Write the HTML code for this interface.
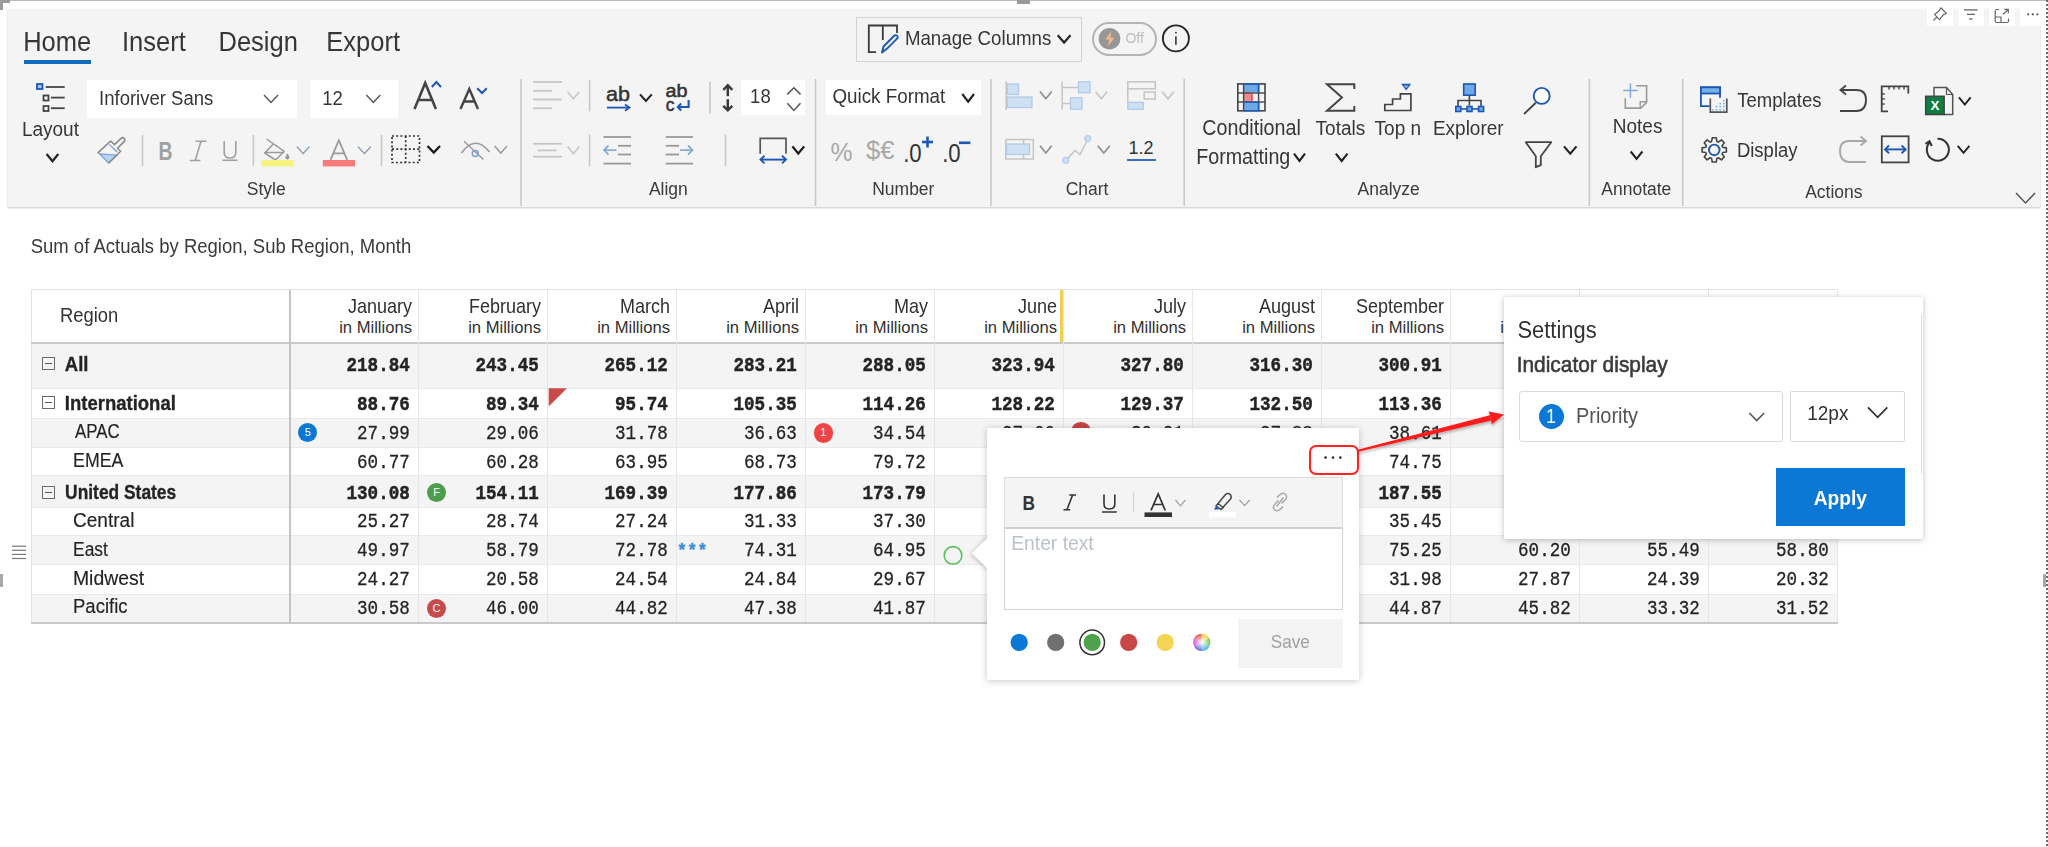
<!DOCTYPE html><html><head><meta charset="utf-8"><style>
html,body{margin:0;padding:0}
body{width:2048px;height:847px;position:relative;overflow:hidden;background:#fff;font-family:'Liberation Sans',sans-serif;}
.t{position:absolute;white-space:nowrap;line-height:1;}
.r{position:absolute;}
svg{position:absolute;left:0;top:0;overflow:visible}
</style></head><body>

<div class="r" style="left:0px;top:0px;width:2048px;height:1px;background:#b9b9b9;"></div>
<div class="r" style="left:0px;top:0px;width:10px;height:3px;background:#9a9a9a;"></div>
<div class="r" style="left:0px;top:0px;width:3px;height:10px;background:#9a9a9a;"></div>
<div class="r" style="left:1017px;top:0px;width:13px;height:4px;background:#999;"></div>
<div class="r" style="left:2046px;top:0;width:2px;height:847px;background:repeating-linear-gradient(#6a6a6a 0 2px,#fff 2px 4px)"></div>
<div class="r" style="left:0px;top:574px;width:3px;height:13px;background:#a8a8a8;"></div>
<div class="r" style="left:2043px;top:574px;width:3px;height:13px;background:#a8a8a8;"></div>
<div class="r" style="left:8px;top:9px;width:2032px;height:198px;background:#f4f4f4;box-shadow:0 1px 2px rgba(0,0,0,0.22);"></div>
<div class="r" style="left:1927px;top:8px;width:26px;height:18px;background:#fff;"></div>
<div class="r" style="left:1958px;top:8px;width:26px;height:18px;background:#fff;"></div>
<div class="r" style="left:1989px;top:8px;width:26px;height:18px;background:#fff;"></div>
<div class="r" style="left:2020px;top:8px;width:21px;height:18px;background:#fff;"></div>
<div class="t" style="left:23.2px;top:29.7px;font-size:25.5px;color:#363636;font-family:'Liberation Sans',sans-serif;transform:scale(1,1.08);transform-origin:2.04px 21.59px;">Home</div>
<div class="t" style="left:122.0px;top:29.7px;font-size:25.5px;color:#363636;font-family:'Liberation Sans',sans-serif;transform:scale(1,1.08);transform-origin:2.04px 21.59px;">Insert</div>
<div class="t" style="left:218.5px;top:29.7px;font-size:25.5px;color:#363636;font-family:'Liberation Sans',sans-serif;transform:scale(1,1.08);transform-origin:2.04px 21.59px;">Design</div>
<div class="t" style="left:326.3px;top:29.7px;font-size:25.5px;color:#363636;font-family:'Liberation Sans',sans-serif;transform:scale(1,1.08);transform-origin:2.04px 21.59px;">Export</div>
<div class="r" style="left:24px;top:60px;width:67px;height:4px;background:#0f6cbd;"></div>
<div class="r" style="left:856px;top:17px;width:224px;height:43px;border:1px solid #d2d2d2;box-sizing:content-box"></div>
<div class="t" style="left:904.9px;top:30.1px;font-size:18.7px;color:#363636;font-family:'Liberation Sans',sans-serif;transform:scale(1,1.08);transform-origin:1.50px 15.83px;">Manage Columns</div>
<div class="r" style="left:1091.8px;top:21.6px;width:65px;height:34.4px;border:2px solid #b4b4b4;border-radius:17.2px;box-sizing:border-box"></div>
<div class="t" style="left:1125.4px;top:31.1px;font-size:14px;color:#bdbdbd;font-family:'Liberation Sans',sans-serif;transform:scale(1,1.08);transform-origin:0.70px 11.85px;">Off</div>
<div class="r" style="left:87px;top:80px;width:210px;height:38px;background:#fff;"></div>
<div class="r" style="left:310px;top:80px;width:88px;height:38px;background:#fff;"></div>
<div class="r" style="left:741px;top:80px;width:64px;height:35px;background:#fff;"></div>
<div class="r" style="left:826px;top:80px;width:155px;height:35px;background:#fff;"></div>
<div class="t" style="left:99.1px;top:90.1px;font-size:18.5px;color:#363636;font-family:'Liberation Sans',sans-serif;transform:scale(1,1.08);transform-origin:1.67px 15.66px;">Inforiver Sans</div>
<div class="t" style="left:322.3px;top:90.1px;font-size:18.5px;color:#363636;font-family:'Liberation Sans',sans-serif;transform:scale(1,1.08);transform-origin:1.30px 15.66px;">12</div>
<div class="t" style="left:750.1px;top:88.3px;font-size:18.5px;color:#363636;font-family:'Liberation Sans',sans-serif;transform:scale(1,1.08);transform-origin:1.30px 15.66px;">18</div>
<div class="t" style="left:832.5px;top:88.1px;font-size:18.8px;color:#363636;font-family:'Liberation Sans',sans-serif;transform:scale(1,1.08);transform-origin:0.94px 15.92px;">Quick Format</div>
<div class="t" style="left:21.9px;top:119.9px;font-size:19px;color:#363636;font-family:'Liberation Sans',sans-serif;transform:scale(1,1.08);transform-origin:1.52px 16.09px;">Layout</div>
<div class="t" style="left:1202.3px;top:118.7px;font-size:19.7px;color:#363636;font-family:'Liberation Sans',sans-serif;transform:scale(1,1.08);transform-origin:0.98px 16.68px;">Conditional</div>
<div class="t" style="left:1196.2px;top:148.3px;font-size:19.7px;color:#363636;font-family:'Liberation Sans',sans-serif;transform:scale(1,1.08);transform-origin:1.58px 16.68px;">Formatting</div>
<div class="t" style="left:1315.6px;top:119.3px;font-size:19px;color:#363636;font-family:'Liberation Sans',sans-serif;transform:scale(1,1.08);transform-origin:0.38px 16.09px;">Totals</div>
<div class="t" style="left:1374.6px;top:119.3px;font-size:19px;color:#363636;font-family:'Liberation Sans',sans-serif;transform:scale(1,1.08);transform-origin:0.38px 16.09px;">Top n</div>
<div class="t" style="left:1432.9px;top:119.3px;font-size:19px;color:#363636;font-family:'Liberation Sans',sans-serif;transform:scale(1,1.08);transform-origin:1.52px 16.09px;">Explorer</div>
<div class="t" style="left:1612.8px;top:117.1px;font-size:19px;color:#363636;font-family:'Liberation Sans',sans-serif;transform:scale(1,1.08);transform-origin:1.52px 16.09px;">Notes</div>
<div class="t" style="left:1737.2px;top:91.5px;font-size:18.5px;color:#363636;font-family:'Liberation Sans',sans-serif;transform:scale(1,1.08);transform-origin:0.37px 15.66px;">Templates</div>
<div class="t" style="left:1736.9px;top:142.3px;font-size:18.5px;color:#363636;font-family:'Liberation Sans',sans-serif;transform:scale(1,1.08);transform-origin:1.48px 15.66px;">Display</div>
<div class="t" style="left:246.8px;top:180.5px;font-size:17.5px;color:#3b3a39;font-family:'Liberation Sans',sans-serif;transform:scale(1,1.08);transform-origin:0.53px 14.82px;">Style</div>
<div class="t" style="left:648.9px;top:180.7px;font-size:17.5px;color:#3b3a39;font-family:'Liberation Sans',sans-serif;transform:scale(1,1.08);transform-origin:0.53px 14.82px;">Align</div>
<div class="t" style="left:872.2px;top:180.7px;font-size:17.5px;color:#3b3a39;font-family:'Liberation Sans',sans-serif;transform:scale(1,1.08);transform-origin:0.53px 14.82px;">Number</div>
<div class="t" style="left:1065.7px;top:180.7px;font-size:17.5px;color:#3b3a39;font-family:'Liberation Sans',sans-serif;transform:scale(1,1.08);transform-origin:0.53px 14.82px;">Chart</div>
<div class="t" style="left:1357.5px;top:180.7px;font-size:17.5px;color:#3b3a39;font-family:'Liberation Sans',sans-serif;transform:scale(1,1.08);transform-origin:0.53px 14.82px;">Analyze</div>
<div class="t" style="left:1601.3px;top:181.0px;font-size:17.5px;color:#3b3a39;font-family:'Liberation Sans',sans-serif;transform:scale(1,1.08);transform-origin:0.53px 14.82px;">Annotate</div>
<div class="t" style="left:1805.2px;top:183.7px;font-size:17.5px;color:#3b3a39;font-family:'Liberation Sans',sans-serif;transform:scale(1,1.08);transform-origin:0.53px 14.82px;">Actions</div>
<svg width="2048" height="847" viewBox="0 0 2048 847">
<line x1="521" y1="79" x2="521" y2="206" stroke="#c8c8c8" stroke-width="1.6" />
<line x1="815.5" y1="79" x2="815.5" y2="206" stroke="#c8c8c8" stroke-width="1.6" />
<line x1="991" y1="79" x2="991" y2="206" stroke="#c8c8c8" stroke-width="1.6" />
<line x1="1184.2" y1="79" x2="1184.2" y2="206" stroke="#c8c8c8" stroke-width="1.6" />
<line x1="1589.4" y1="79" x2="1589.4" y2="206" stroke="#c8c8c8" stroke-width="1.6" />
<line x1="1682.7" y1="79" x2="1682.7" y2="206" stroke="#c8c8c8" stroke-width="1.6" />
<line x1="142.5" y1="135" x2="142.5" y2="166" stroke="#c8c8c8" stroke-width="1.6" />
<line x1="253.4" y1="135" x2="253.4" y2="166" stroke="#c8c8c8" stroke-width="1.6" />
<line x1="381.5" y1="135" x2="381.5" y2="166" stroke="#c8c8c8" stroke-width="1.6" />
<line x1="589.6" y1="80" x2="589.6" y2="111.3" stroke="#c8c8c8" stroke-width="1.6" />
<line x1="589.6" y1="134.7" x2="589.6" y2="166.2" stroke="#c8c8c8" stroke-width="1.6" />
<line x1="710" y1="82" x2="710" y2="113.5" stroke="#c8c8c8" stroke-width="1.6" />
<line x1="725.5" y1="134.7" x2="725.5" y2="166.2" stroke="#c8c8c8" stroke-width="1.6" />
<path d="M876,25.5 H868.8 V52.2 H876" fill="none" stroke="#3a3a3a" stroke-width="1.8"/>
<path d="M876,25.5 H897 V33 M882.8,25.5 V40" fill="none" stroke="#3a3a3a" stroke-width="1.8"/>
<path d="M882,52.5 L883.5,46.5 L894.5,35.5 Q897.5,34.5 897.8,37.8 L886.8,48.8 Z" fill="none" stroke="#1c57b3" stroke-width="1.9" stroke-linejoin="round"/>
<polyline points="1057.7,35.3 1064.1,42.5 1070.5,35.3" fill="none" stroke="#252525" stroke-width="2.2"/>
<circle cx="1109.5" cy="38.7" r="10.8" fill="#979797"/>
<path d="M1111.6,30.9 L1105.2,39.6 L1109.3,39.6 L1108.1,46.3 L1114.4,37.8 L1110.3,37.8 Z" fill="#f8b88a"/>
<circle cx="1175.9" cy="38.4" r="13" fill="none" stroke="#262626" stroke-width="1.9"/>
<circle cx="1175.9" cy="32.6" r="0.95" fill="#333"/>
<line x1="1175.9" y1="36.2" x2="1175.9" y2="44.8" stroke="#333" stroke-width="1.6" />
<path d="M1940.8,7.8 L1946.5,13.4 L1943.4,14.6 L1939.6,19.6 L1934.4,14.4 L1939.3,10.7 Z M1936.9,17 L1933.4,20.6" fill="none" stroke="#666" stroke-width="1.2" stroke-linejoin="round"/>
<line x1="1964" y1="9.9" x2="1977.6" y2="9.9" stroke="#666" stroke-width="1.3" /><line x1="1966.8" y1="14.4" x2="1975" y2="14.4" stroke="#666" stroke-width="1.3" /><line x1="1969" y1="19" x2="1972.5" y2="19" stroke="#666" stroke-width="1.3" />
<path d="M1999,9.5 H1997 Q1995.2,9.5 1995.2,11.3 V20.7 Q1995.2,22.5 1997,22.5 H2006.7 Q2008.5,22.5 2008.5,20.7 V18.5 M1995.2,17 H2001 V22.5 M2003,14.5 L2008.3,9.3 M2004.3,9.3 H2008.3 V13.3" fill="none" stroke="#666" stroke-width="1.2"/>
<circle cx="2028.2" cy="14.3" r="1.1" fill="#555"/>
<circle cx="2032.8" cy="14.3" r="1.1" fill="#555"/>
<circle cx="2037.4" cy="14.3" r="1.1" fill="#555"/>
<rect x="37" y="84" width="5.5" height="5" fill="#a9c7ec" stroke="#1c57b3" stroke-width="1.8"/>
<line x1="45.7" y1="87" x2="64.7" y2="87" stroke="#444" stroke-width="1.8" /><line x1="51" y1="97.6" x2="64.7" y2="97.6" stroke="#444" stroke-width="1.8" /><line x1="51" y1="108.2" x2="64.7" y2="108.2" stroke="#444" stroke-width="1.8" />
<rect x="43.5" y="95.5" width="5" height="5" fill="none" stroke="#444" stroke-width="1.8"/>
<rect x="43.5" y="106" width="5" height="5" fill="none" stroke="#444" stroke-width="1.8"/>
<polyline points="46.6,154 52.45,161.3 58.3,154" fill="none" stroke="#222" stroke-width="2.2"/>
<polyline points="264,95 271.0,102.5 278,95" fill="none" stroke="#555" stroke-width="1.4"/><polyline points="366.4,95 373.35,102.5 380.3,95" fill="none" stroke="#555" stroke-width="1.4"/>
<path d="M414.5,109 L425.2,83 L435.9,109 M418.6,100 H431.8" fill="none" stroke="#444" stroke-width="2.6"/>
<polyline points="431.8,87 436.4,82 441,87" fill="none" stroke="#1c57b3" stroke-width="2"/>
<path d="M460.5,109 L469.3,89 L478,109 M463.8,101.5 H474.8" fill="none" stroke="#444" stroke-width="2.4"/>
<polyline points="477.2,88.3 482,93 486.8,88.3" fill="none" stroke="#1c57b3" stroke-width="2"/>
<line x1="533" y1="82" x2="562" y2="82" stroke="#c6c6c6" stroke-width="1.8" /><line x1="533" y1="90.8" x2="552" y2="90.8" stroke="#c6c6c6" stroke-width="1.8" /><line x1="533" y1="99.5" x2="562" y2="99.5" stroke="#c6c6c6" stroke-width="1.8" /><line x1="533" y1="108.3" x2="552" y2="108.3" stroke="#c6c6c6" stroke-width="1.8" />
<polyline points="567.6,92 573.45,98.8 579.3,92" fill="none" stroke="#c6c6c6" stroke-width="1.6"/>
<text x="606" y="101" font-family="Liberation Sans" font-size="21" fill="#333" stroke="#333" stroke-width="0.5" textLength="24" lengthAdjust="spacingAndGlyphs">ab</text>
<line x1="607" y1="107.6" x2="628" y2="107.6" stroke="#1c57b3" stroke-width="1.8" /><polyline points="625,104.5 629.5,107.6 625,110.7" fill="none" stroke="#1c57b3" stroke-width="1.8"/>
<polyline points="640,94.4 645.9,101 651.8,94.4" fill="none" stroke="#222" stroke-width="2"/>
<text x="665.5" y="97.4" font-family="Liberation Sans" font-size="17.5" fill="#333" stroke="#333" stroke-width="0.5" textLength="22" lengthAdjust="spacingAndGlyphs">ab</text>
<text x="665.8" y="110.8" font-family="Liberation Sans" font-size="17.5" fill="#333" stroke="#333" stroke-width="0.5">c</text>
<path d="M688.6,100 V107 H678 M681.2,103.6 L677.8,107 L681.2,110.4" fill="none" stroke="#1c57b3" stroke-width="2.1"/>
<line x1="727.8" y1="85.5" x2="727.8" y2="96.2" stroke="#3a3a3a" stroke-width="2.5" /><line x1="727.8" y1="99.2" x2="727.8" y2="110" stroke="#3a3a3a" stroke-width="2.5" /><polyline points="723.3,89.8 727.8,85.2 732.3,89.8" fill="none" stroke="#3a3a3a" stroke-width="2.4"/><polyline points="723.3,105.8 727.8,110.4 732.3,105.8" fill="none" stroke="#3a3a3a" stroke-width="2.4"/>
<polyline points="787.3,94.4 793.9,87.8 800.5,94.4" fill="none" stroke="#555" stroke-width="1.5"/><polyline points="787.3,103.2 793.9,110.5 800.5,103.2" fill="none" stroke="#555" stroke-width="1.5"/>
<polyline points="962.3,94 968.15,101.7 974,94" fill="none" stroke="#222" stroke-width="2.1"/>
<path d="M99.5,153.8 L108.5,163 L117,155.2 Z" fill="#b9d5f2" stroke="#7aa6d8" stroke-width="1.3" stroke-linejoin="round"/>
<path d="M99.5,153.5 L98.2,152.6 L110.6,141 L114.5,144.6 L120.8,138.6 Q123,136.6 124.5,138.8 Q125.5,140.5 123.3,142.4 L117.5,148.2 L120.6,151.2 L108.5,163.2" fill="none" stroke="#8a8a8a" stroke-width="1.6" stroke-linejoin="round"/>
<line x1="109.2" y1="144.4" x2="117.2" y2="152" stroke="#7aa0d0" stroke-width="1.3" />
<text x="158.5" y="159.6" font-family="Liberation Sans" font-weight="bold" font-size="26" fill="#a0a0a0" textLength="14" lengthAdjust="spacingAndGlyphs">B</text>
<path d="M195.5,141.3 H206.5 M189.7,160.5 H200.5 M201,141.3 L195.2,160.5" fill="none" stroke="#a0a0a0" stroke-width="1.6"/>
<path d="M224.2,141 V152.5 Q224.2,158 230,158 Q235.8,158 235.8,152.5 V141 M222.4,160.2 H237.6" fill="none" stroke="#a0a0a0" stroke-width="1.6"/>
<path d="M266.5,139 L284.3,151.3 M273.6,143.8 L264.6,153 L275.6,160 L284.3,151.3 M264.6,152.6 H284.3" fill="none" stroke="#9a9a9a" stroke-width="1.5" stroke-linejoin="round"/>
<path d="M287.4,153.2 Q284.8,157 285.6,158.6 Q287.4,160.6 289.2,158.6 Q290,157 287.4,153.2Z" fill="#999"/>
<rect x="261.4" y="160" width="32.2" height="6.4" fill="#f6f37e"/>
<polyline points="296.9,146.6 303.1,153.6 309.3,146.6" fill="none" stroke="#7f93ac" stroke-width="1.3"/>
<path d="M330.5,159.8 L338.8,140.2 L347.2,159.8 M333.3,153.3 H344.3" fill="none" stroke="#9a9a9a" stroke-width="1.8"/>
<rect x="322.8" y="160" width="32.2" height="6.4" fill="#f77b7b"/>
<polyline points="358,146.6 364.4,153.6 370.8,146.6" fill="none" stroke="#7f93ac" stroke-width="1.3"/>
<rect x="392" y="136" width="27.5" height="26.5" fill="none" stroke="#333" stroke-width="1.7" stroke-dasharray="2 2.2"/>
<line x1="405.7" y1="136" x2="405.7" y2="162.5" stroke="#333" stroke-width="1.7" stroke-dasharray="2 2.2"/><line x1="392" y1="149.2" x2="419.5" y2="149.2" stroke="#333" stroke-width="1.7" stroke-dasharray="2 2.2"/>
<polyline points="427.5,146 433.75,152.5 440,146" fill="none" stroke="#1a1a1a" stroke-width="2.3"/>
<path d="M461.5,153 Q475,134 489.5,152" fill="none" stroke="#9a9a9a" stroke-width="1.5"/>
<line x1="464" y1="141.3" x2="483.5" y2="159.5" stroke="#9a9a9a" stroke-width="1.5" />
<circle cx="475.3" cy="153.6" r="3" fill="none" stroke="#7aa0d0" stroke-width="1.5"/>
<polyline points="494.6,146 500.8,153 507,146" fill="none" stroke="#9a9a9a" stroke-width="1.5"/>
<line x1="533" y1="143.8" x2="562" y2="143.8" stroke="#c6c6c6" stroke-width="1.8" /><line x1="537.6" y1="150.4" x2="556.6" y2="150.4" stroke="#c6c6c6" stroke-width="1.8" /><line x1="533" y1="156.7" x2="562" y2="156.7" stroke="#c6c6c6" stroke-width="1.8" />
<polyline points="567.6,146.4 573.45,153.7 579.3,146.4" fill="none" stroke="#c6c6c6" stroke-width="1.6"/>
<line x1="603.5" y1="137" x2="631" y2="137" stroke="#999" stroke-width="1.8" /><line x1="603.5" y1="163.6" x2="631" y2="163.6" stroke="#999" stroke-width="1.8" /><line x1="618" y1="145.8" x2="631" y2="145.8" stroke="#999" stroke-width="1.8" /><line x1="618" y1="154.5" x2="631" y2="154.5" stroke="#999" stroke-width="1.8" />
<line x1="604" y1="150.1" x2="616.5" y2="150.1" stroke="#7fa6d6" stroke-width="1.6" /><polyline points="608.5,145.6 604,150.1 608.5,154.6" fill="none" stroke="#7fa6d6" stroke-width="1.6"/>
<line x1="665.7" y1="137" x2="693.1" y2="137" stroke="#999" stroke-width="1.8" /><line x1="665.7" y1="163.6" x2="693.1" y2="163.6" stroke="#999" stroke-width="1.8" /><line x1="665.7" y1="145.8" x2="679" y2="145.8" stroke="#999" stroke-width="1.8" /><line x1="665.7" y1="154.5" x2="679" y2="154.5" stroke="#999" stroke-width="1.8" />
<line x1="680" y1="150.1" x2="692.5" y2="150.1" stroke="#7fa6d6" stroke-width="1.6" /><polyline points="688,145.6 692.5,150.1 688,154.6" fill="none" stroke="#7fa6d6" stroke-width="1.6"/>
<path d="M760.2,153.7 V138.4 H786 V153.7" fill="none" stroke="#555" stroke-width="1.7"/>
<line x1="761" y1="159.6" x2="785.5" y2="159.6" stroke="#1c57b3" stroke-width="1.9" /><polyline points="764.5,155.8 760.5,159.6 764.5,163.4" fill="none" stroke="#1c57b3" stroke-width="1.9"/><polyline points="782,155.8 786,159.6 782,163.4" fill="none" stroke="#1c57b3" stroke-width="1.9"/>
<polyline points="792.4,146.4 798.3,153.5 804.2,146.4" fill="none" stroke="#1a1a1a" stroke-width="2.2"/>
<text x="830.5" y="160.8" font-family="Liberation Sans" font-size="26" fill="#a8a8a8" textLength="22" lengthAdjust="spacingAndGlyphs">%</text>
<text x="866" y="158.5" font-family="Liberation Sans" font-size="26" fill="#a8a8a8" textLength="28.5" lengthAdjust="spacingAndGlyphs">$€</text>
<text x="903.2" y="161.8" font-family="Liberation Sans" font-size="25" fill="#333" textLength="18.5" lengthAdjust="spacingAndGlyphs">.0</text>
<line x1="927.5" y1="136.5" x2="927.5" y2="147.5" stroke="#1c57b3" stroke-width="2.6" /><line x1="922" y1="142" x2="933" y2="142" stroke="#1c57b3" stroke-width="2.6" />
<text x="942.2" y="161.8" font-family="Liberation Sans" font-size="25" fill="#333" textLength="18.5" lengthAdjust="spacingAndGlyphs">.0</text>
<line x1="959" y1="142.8" x2="970.4" y2="142.8" stroke="#1c57b3" stroke-width="2.6" />
<line x1="1006.2" y1="81" x2="1006.2" y2="110" stroke="#c4c4c4" stroke-width="1.5" />
<rect x="1007.5" y="84" width="11" height="10.5" fill="#cfe0f3" stroke="#b3cbe8" stroke-width="1.3"/>
<rect x="1007.5" y="97" width="24.5" height="10.5" fill="#cfe0f3" stroke="#b3cbe8" stroke-width="1.3"/>
<polyline points="1040,91.5 1045.85,98.8 1051.7,91.5" fill="none" stroke="#8c8c8c" stroke-width="1.6"/>
<line x1="1062.2" y1="81.5" x2="1062.2" y2="109.5" stroke="#c4c4c4" stroke-width="1.5" /><line x1="1062.2" y1="87.5" x2="1078" y2="87.5" stroke="#c4c4c4" stroke-width="1.5" /><line x1="1062.2" y1="103.5" x2="1070" y2="103.5" stroke="#c4c4c4" stroke-width="1.5" />
<rect x="1078.5" y="81.8" width="11.5" height="11" fill="#cfe0f3" stroke="#b3cbe8" stroke-width="1.3"/>
<rect x="1070.5" y="97.8" width="11.5" height="11.5" fill="#cfe0f3" stroke="#b3cbe8" stroke-width="1.3"/>
<polyline points="1095.6,91.5 1101.4,98.8 1107.2,91.5" fill="none" stroke="#c4c4c4" stroke-width="1.5"/>
<rect x="1127.8" y="81.8" width="27.5" height="7" fill="none" stroke="#c4c4c4" stroke-width="1.5"/>
<rect x="1144.2" y="92" width="11" height="7" fill="none" stroke="#c4c4c4" stroke-width="1.5"/>
<line x1="1127.8" y1="88.8" x2="1127.8" y2="102" stroke="#c4c4c4" stroke-width="1.5" />
<rect x="1127.8" y="102.3" width="15.5" height="7" fill="#cfe0f3" stroke="#b3cbe8" stroke-width="1.3"/>
<polyline points="1162,91.5 1168.0,98.8 1174,91.5" fill="none" stroke="#c4c4c4" stroke-width="1.5"/>
<rect x="1005.8" y="139.5" width="27.5" height="19.5" fill="none" stroke="#c4c4c4" stroke-width="1.5"/>
<rect x="1006.5" y="144" width="23" height="10.5" fill="#cfe0f3" stroke="#b3cbe8" stroke-width="1.3"/>
<line x1="1023.5" y1="139.5" x2="1023.5" y2="144" stroke="#c4c4c4" stroke-width="1.5" /><line x1="1023.5" y1="154.5" x2="1023.5" y2="159" stroke="#c4c4c4" stroke-width="1.5" />
<polyline points="1040,145.7 1045.85,153 1051.7,145.7" fill="none" stroke="#8c8c8c" stroke-width="1.6"/>
<polyline points="1066.3,159.8 1075,150.5 1080,154.5 1087.5,140" fill="none" stroke="#c4c4c4" stroke-width="1.5"/>
<circle cx="1065.8" cy="160.3" r="2.9" fill="#cfe0f3" stroke="#b3cbe8" stroke-width="1.3"/><circle cx="1087.8" cy="138.5" r="2.9" fill="#cfe0f3" stroke="#b3cbe8" stroke-width="1.3"/>
<polyline points="1097.7,145.7 1103.8000000000002,153 1109.9,145.7" fill="none" stroke="#8c8c8c" stroke-width="1.6"/>
<text x="1128.5" y="153.7" font-family="Liberation Sans" font-size="18" fill="#333" textLength="25" lengthAdjust="spacingAndGlyphs">1.2</text>
<line x1="1127" y1="160" x2="1156" y2="160" stroke="#3a6ec4" stroke-width="2" />
<rect x="1243.6" y="84" width="15" height="8.5" fill="#6fa8e6"/><rect x="1243.6" y="102.2" width="15" height="8.5" fill="#6fa8e6"/><rect x="1243.6" y="92.5" width="8.5" height="9.7" fill="#f08a8a"/>
<rect x="1237.8" y="83.9" width="27.2" height="26.9" fill="none" stroke="#444" stroke-width="1.6"/>
<line x1="1237.8" y1="93" x2="1265" y2="93" stroke="#444" stroke-width="1.4" /><line x1="1237.8" y1="102" x2="1265" y2="102" stroke="#444" stroke-width="1.4" /><line x1="1243.6" y1="84" x2="1243.6" y2="110.8" stroke="#444" stroke-width="1.4" /><line x1="1258.6" y1="84" x2="1258.6" y2="110.8" stroke="#444" stroke-width="1.4" />
<path d="M1243.6,84 H1258.6 V93 M1243.6,102 H1258.6 V110.8 H1243.6" fill="none" stroke="#1f5fbf" stroke-width="1.6"/>
<line x1="1252" y1="93" x2="1252" y2="102" stroke="#d44" stroke-width="1.4" />
<path d="M1354.3,89 V84.2 H1327 L1342,97.5 L1327,110.8 H1354.3 V106" fill="none" stroke="#444" stroke-width="2" stroke-linejoin="miter"/>
<path d="M1384.8,110.5 V104.5 H1392.6 V99 H1400.4 V93.8 H1410.9 V110.5 Z" fill="none" stroke="#444" stroke-width="1.7"/>
<path d="M1401.2,83.8 H1411.2 L1406.2,90.5 Z" fill="#1c57b3"/><path d="M1403.8,85.5 H1408.6 L1406.2,88.5 Z" fill="#8ab8ee"/>
<rect x="1463.7" y="84" width="11.5" height="11.2" fill="#6fa8e6" stroke="#1c57b3" stroke-width="1.6"/>
<path d="M1469.4,95.5 V105.5 M1458,106 V100.5 H1481 V106" fill="none" stroke="#444" stroke-width="1.6"/>
<rect x="1455.8" y="106.5" width="5" height="5" fill="#6fa8e6" stroke="#1c57b3" stroke-width="1.6"/>
<rect x="1467" y="106.5" width="5" height="5" fill="#6fa8e6" stroke="#1c57b3" stroke-width="1.6"/>
<rect x="1478.6" y="106.5" width="5" height="5" fill="#6fa8e6" stroke="#1c57b3" stroke-width="1.6"/>
<line x1="1461" y1="109" x2="1467" y2="109" stroke="#1c57b3" stroke-width="1.6" /><line x1="1472" y1="109" x2="1478.6" y2="109" stroke="#1c57b3" stroke-width="1.6" />
<line x1="1524" y1="114" x2="1535.8" y2="102.8" stroke="#444" stroke-width="1.9" />
<circle cx="1541.7" cy="95.9" r="8" fill="#fff" stroke="#1c57b3" stroke-width="1.9"/>
<path d="M1525.8,142.2 H1551.2 L1540.8,156.2 V165.2 L1535.8,167.2 V156.2 Z" fill="none" stroke="#444" stroke-width="1.8" stroke-linejoin="round"/>
<polyline points="1564,146.4 1570.25,153.7 1576.5,146.4" fill="none" stroke="#222" stroke-width="2.1"/>
<polyline points="1335.8,153.7 1341.65,161 1347.5,153.7" fill="none" stroke="#222" stroke-width="2.1"/><polyline points="1294,153.7 1299.5,161 1305,153.7" fill="none" stroke="#222" stroke-width="2.1"/>
<path d="M1636.2,85.8 H1646.6 V102.4 L1640.8,108.1 H1625.3 V98.2" fill="none" stroke="#9a9a9a" stroke-width="1.6"/>
<path d="M1646.6,101.8 H1640.2 V108.1" fill="none" stroke="#9a9a9a" stroke-width="1.4"/>
<line x1="1630.4" y1="83.4" x2="1630.4" y2="97.8" stroke="#7ea9de" stroke-width="1.5" /><line x1="1623.2" y1="90.5" x2="1637.8" y2="90.5" stroke="#7ea9de" stroke-width="1.5" />
<polyline points="1630.7,151.5 1636.5500000000002,158.9 1642.4,151.5" fill="none" stroke="#222" stroke-width="2.1"/>
<path d="M1709.5,106.2 H1700.9 V87.3 H1720 V97.8" fill="none" stroke="#1c57b3" stroke-width="1.8"/><rect x="1700.9" y="87.3" width="19.1" height="6.2" fill="#75b0ea" stroke="#1c57b3" stroke-width="1.8"/>
<path d="M1710.3,98.4 V112.2 H1726.8 V98.4" fill="none" stroke="#555" stroke-width="1.7"/>
<rect x="1723.0" y="99.8" width="1.6" height="1.6" fill="#7fb0e8"/>
<rect x="1719.4" y="102.8" width="1.6" height="1.6" fill="#7fb0e8"/>
<rect x="1723.0" y="102.8" width="1.6" height="1.6" fill="#7fb0e8"/>
<rect x="1715.7" y="105.8" width="1.6" height="1.6" fill="#7fb0e8"/>
<rect x="1719.4" y="105.8" width="1.6" height="1.6" fill="#7fb0e8"/>
<rect x="1723.0" y="105.8" width="1.6" height="1.6" fill="#7fb0e8"/>
<rect x="1712.0" y="109.0" width="1.6" height="1.6" fill="#7fb0e8"/>
<rect x="1715.7" y="109.0" width="1.6" height="1.6" fill="#7fb0e8"/>
<rect x="1719.4" y="109.0" width="1.6" height="1.6" fill="#7fb0e8"/>
<rect x="1723.0" y="109.0" width="1.6" height="1.6" fill="#7fb0e8"/>
<path d="M1841,90 H1856.5 Q1866,90 1866,99.8 Q1866,111 1856.5,111 H1840" fill="none" stroke="#444" stroke-width="1.9"/><polyline points="1846,85.6 1840.5,90 1846,94.4" fill="none" stroke="#444" stroke-width="1.9"/>
<path d="M1865,141 H1849.5 Q1840,141 1840,150.8 Q1840,162 1849.5,162 H1866" fill="none" stroke="#a8a8a8" stroke-width="1.9"/><polyline points="1860.5,136.6 1866,141 1860.5,145.4" fill="none" stroke="#a8a8a8" stroke-width="1.9"/>
<path d="M1888,111.3 H1881.7 V86.4 H1908.3 V93.5" fill="none" stroke="#444" stroke-width="1.8"/>
<line x1="1889" y1="86.4" x2="1889" y2="89.5" stroke="#444" stroke-width="1.4" />
<line x1="1894" y1="86.4" x2="1894" y2="89.5" stroke="#444" stroke-width="1.4" />
<line x1="1899" y1="86.4" x2="1899" y2="89.5" stroke="#444" stroke-width="1.4" />
<line x1="1904" y1="86.4" x2="1904" y2="89.5" stroke="#444" stroke-width="1.4" />
<line x1="1881.7" y1="94" x2="1884.8" y2="94" stroke="#444" stroke-width="1.4" />
<line x1="1881.7" y1="99" x2="1884.8" y2="99" stroke="#444" stroke-width="1.4" />
<line x1="1881.7" y1="104" x2="1884.8" y2="104" stroke="#444" stroke-width="1.4" />
<path d="M1934,96 V87.4 H1946.5 L1952.7,94.5 V114.4 H1944" fill="none" stroke="#555" stroke-width="1.5"/><path d="M1946.5,87.4 V94.5 H1952.7" fill="none" stroke="#555" stroke-width="1.2"/>
<rect x="1925.6" y="96.2" width="18.6" height="18.4" fill="#107c41" stroke="#3c3c3c" stroke-width="1.3"/>
<text x="1934.9" y="110.2" font-family="Liberation Sans" font-weight="bold" font-size="13.5" fill="#fff" text-anchor="middle">X</text>
<polyline points="1959,97.4 1964.8,104.5 1970.6,97.4" fill="none" stroke="#222" stroke-width="1.9"/>
<polygon points="1722.75,147.27 1726.38,147.88 1726.38,151.92 1722.75,152.53 1722.12,154.05 1724.26,157.05 1721.40,159.91 1718.40,157.77 1716.88,158.40 1716.27,162.03 1712.23,162.03 1711.62,158.40 1710.10,157.77 1707.10,159.91 1704.24,157.05 1706.38,154.05 1705.75,152.53 1702.12,151.92 1702.12,147.88 1705.75,147.27 1706.38,145.75 1704.24,142.75 1707.10,139.89 1710.10,142.03 1711.62,141.40 1712.23,137.77 1716.27,137.77 1716.88,141.40 1718.40,142.03 1721.40,139.89 1724.26,142.75 1722.12,145.75" fill="none" stroke="#444" stroke-width="1.6" stroke-linejoin="round"/>
<circle cx="1714.25" cy="149.9" r="5.3" fill="none" stroke="#1c57b3" stroke-width="1.9"/>
<rect x="1881.8" y="136.3" width="26.8" height="26.1" fill="none" stroke="#444" stroke-width="1.8"/>
<line x1="1885" y1="149.4" x2="1905.6" y2="149.4" stroke="#1c57b3" stroke-width="1.9" /><polyline points="1889,145.5 1885,149.4 1889,153.3" fill="none" stroke="#1c57b3" stroke-width="1.9"/><polyline points="1901.6,145.5 1905.6,149.4 1901.6,153.3" fill="none" stroke="#1c57b3" stroke-width="1.9"/>
<path d="M1930,142 A11,11 0 1 0 1937.5,138.7" fill="none" stroke="#333" stroke-width="2"/>
<polyline points="1925.5,143.8 1929.5,141.2 1931.8,146" fill="none" stroke="#333" stroke-width="2"/>
<polyline points="1957.7,145.8 1963.5500000000002,152.8 1969.4,145.8" fill="none" stroke="#222" stroke-width="1.9"/>
<polyline points="2016,193 2025.5,203 2035,193" fill="none" stroke="#555" stroke-width="1.5"/>
</svg>
<div class="t" style="left:30.7px;top:237.7px;font-size:18.5px;color:#3b3a39;font-family:'Liberation Sans',sans-serif;transform:scale(1,1.08);transform-origin:0.83px 15.66px;">Sum of Actuals by Region, Sub Region, Month</div>
<div class="r" style="left:31px;top:289px;width:1807px;height:1px;background:#e3e3e3"></div>
<div class="r" style="left:31px;top:290px;width:1807px;height:52px;background:#fff"></div>
<div class="r" style="left:31px;top:344px;width:1807px;height:44px;background:#f4f4f4"></div>
<div class="r" style="left:31px;top:388px;width:1807px;height:30px;background:#fff"></div>
<div class="r" style="left:31px;top:388px;width:1807px;height:1px;background:#e9e9e9"></div>
<div class="r" style="left:31px;top:418px;width:1807px;height:28.5px;background:#f4f4f4"></div>
<div class="r" style="left:31px;top:418px;width:1807px;height:1px;background:#e9e9e9"></div>
<div class="r" style="left:31px;top:446.5px;width:1807px;height:28.80000000000001px;background:#fff"></div>
<div class="r" style="left:31px;top:446.5px;width:1807px;height:1px;background:#e9e9e9"></div>
<div class="r" style="left:31px;top:475.3px;width:1807px;height:31.399999999999977px;background:#f4f4f4"></div>
<div class="r" style="left:31px;top:475.3px;width:1807px;height:1px;background:#e9e9e9"></div>
<div class="r" style="left:31px;top:506.7px;width:1807px;height:28.599999999999966px;background:#fff"></div>
<div class="r" style="left:31px;top:506.7px;width:1807px;height:1px;background:#e9e9e9"></div>
<div class="r" style="left:31px;top:535.3px;width:1807px;height:29.100000000000023px;background:#f4f4f4"></div>
<div class="r" style="left:31px;top:535.3px;width:1807px;height:1px;background:#e9e9e9"></div>
<div class="r" style="left:31px;top:564.4px;width:1807px;height:29.100000000000023px;background:#fff"></div>
<div class="r" style="left:31px;top:564.4px;width:1807px;height:1px;background:#e9e9e9"></div>
<div class="r" style="left:31px;top:593.5px;width:1807px;height:28.700000000000045px;background:#f4f4f4"></div>
<div class="r" style="left:31px;top:593.5px;width:1807px;height:1px;background:#e9e9e9"></div>
<div class="r" style="left:31px;top:289px;width:1px;height:334px;background:#e3e3e3;"></div>
<div class="r" style="left:31px;top:342px;width:1807px;height:2px;background:#c9c9c9;"></div>
<div class="r" style="left:31px;top:622px;width:1807px;height:2px;background:#c9c9c9;"></div>
<div class="r" style="left:418px;top:290px;width:1px;height:332px;background:#e6e6e6;"></div>
<div class="r" style="left:547px;top:290px;width:1px;height:332px;background:#e6e6e6;"></div>
<div class="r" style="left:676px;top:290px;width:1px;height:332px;background:#e6e6e6;"></div>
<div class="r" style="left:805px;top:290px;width:1px;height:332px;background:#e6e6e6;"></div>
<div class="r" style="left:934px;top:290px;width:1px;height:332px;background:#e6e6e6;"></div>
<div class="r" style="left:1063px;top:290px;width:1px;height:332px;background:#e6e6e6;"></div>
<div class="r" style="left:1192px;top:290px;width:1px;height:332px;background:#e6e6e6;"></div>
<div class="r" style="left:1321px;top:290px;width:1px;height:332px;background:#e6e6e6;"></div>
<div class="r" style="left:1450px;top:290px;width:1px;height:332px;background:#e6e6e6;"></div>
<div class="r" style="left:1579px;top:290px;width:1px;height:332px;background:#e6e6e6;"></div>
<div class="r" style="left:1708px;top:290px;width:1px;height:332px;background:#e6e6e6;"></div>
<div class="r" style="left:1837px;top:290px;width:1px;height:332px;background:#e6e6e6;"></div>
<div class="r" style="left:289px;top:290px;width:2px;height:333px;background:#c4c4c4;"></div>
<div class="r" style="left:1060px;top:290px;width:3px;height:52px;background:#f2cf4a;"></div>
<div class="t" style="left:60.0px;top:307.0px;font-size:18.4px;color:#323130;font-family:'Liberation Sans',sans-serif;transform:scale(1,1.08);transform-origin:1.47px 15.58px;">Region</div>
<div class="t" style="right:1636.0px;top:297.7px;font-size:18px;color:#323130;font-family:'Liberation Sans',sans-serif;transform:scale(1,1.08);transform-origin:100% 15.24px;">January</div>
<div class="t" style="right:1636.0px;top:319.7px;font-size:16.6px;color:#323130;font-family:'Liberation Sans',sans-serif;">in Millions</div>
<div class="t" style="right:1507.0px;top:297.7px;font-size:18px;color:#323130;font-family:'Liberation Sans',sans-serif;transform:scale(1,1.08);transform-origin:100% 15.24px;">February</div>
<div class="t" style="right:1507.0px;top:319.7px;font-size:16.6px;color:#323130;font-family:'Liberation Sans',sans-serif;">in Millions</div>
<div class="t" style="right:1378.0px;top:297.7px;font-size:18px;color:#323130;font-family:'Liberation Sans',sans-serif;transform:scale(1,1.08);transform-origin:100% 15.24px;">March</div>
<div class="t" style="right:1378.0px;top:319.7px;font-size:16.6px;color:#323130;font-family:'Liberation Sans',sans-serif;">in Millions</div>
<div class="t" style="right:1249.0px;top:297.7px;font-size:18px;color:#323130;font-family:'Liberation Sans',sans-serif;transform:scale(1,1.08);transform-origin:100% 15.24px;">April</div>
<div class="t" style="right:1249.0px;top:319.7px;font-size:16.6px;color:#323130;font-family:'Liberation Sans',sans-serif;">in Millions</div>
<div class="t" style="right:1120.0px;top:297.7px;font-size:18px;color:#323130;font-family:'Liberation Sans',sans-serif;transform:scale(1,1.08);transform-origin:100% 15.24px;">May</div>
<div class="t" style="right:1120.0px;top:319.7px;font-size:16.6px;color:#323130;font-family:'Liberation Sans',sans-serif;">in Millions</div>
<div class="t" style="right:991.0px;top:297.7px;font-size:18px;color:#323130;font-family:'Liberation Sans',sans-serif;transform:scale(1,1.08);transform-origin:100% 15.24px;">June</div>
<div class="t" style="right:991.0px;top:319.7px;font-size:16.6px;color:#323130;font-family:'Liberation Sans',sans-serif;">in Millions</div>
<div class="t" style="right:862.0px;top:297.7px;font-size:18px;color:#323130;font-family:'Liberation Sans',sans-serif;transform:scale(1,1.08);transform-origin:100% 15.24px;">July</div>
<div class="t" style="right:862.0px;top:319.7px;font-size:16.6px;color:#323130;font-family:'Liberation Sans',sans-serif;">in Millions</div>
<div class="t" style="right:733.0px;top:297.7px;font-size:18px;color:#323130;font-family:'Liberation Sans',sans-serif;transform:scale(1,1.08);transform-origin:100% 15.24px;">August</div>
<div class="t" style="right:733.0px;top:319.7px;font-size:16.6px;color:#323130;font-family:'Liberation Sans',sans-serif;">in Millions</div>
<div class="t" style="right:604.0px;top:297.7px;font-size:18px;color:#323130;font-family:'Liberation Sans',sans-serif;transform:scale(1,1.08);transform-origin:100% 15.24px;">September</div>
<div class="t" style="right:604.0px;top:319.7px;font-size:16.6px;color:#323130;font-family:'Liberation Sans',sans-serif;">in Millions</div>
<div class="t" style="right:475.0px;top:297.7px;font-size:18px;color:#323130;font-family:'Liberation Sans',sans-serif;transform:scale(1,1.08);transform-origin:100% 15.24px;">October</div>
<div class="t" style="right:475.0px;top:319.7px;font-size:16.6px;color:#323130;font-family:'Liberation Sans',sans-serif;">in Millions</div>
<div class="t" style="right:346.0px;top:297.7px;font-size:18px;color:#323130;font-family:'Liberation Sans',sans-serif;transform:scale(1,1.08);transform-origin:100% 15.24px;">November</div>
<div class="t" style="right:346.0px;top:319.7px;font-size:16.6px;color:#323130;font-family:'Liberation Sans',sans-serif;">in Millions</div>
<div class="t" style="right:217.0px;top:297.7px;font-size:18px;color:#323130;font-family:'Liberation Sans',sans-serif;transform:scale(1,1.08);transform-origin:100% 15.24px;">December</div>
<div class="t" style="right:217.0px;top:319.7px;font-size:16.6px;color:#323130;font-family:'Liberation Sans',sans-serif;">in Millions</div>
<div class="r" style="left:42px;top:357.4px;width:11px;height:11px;border:1.2px solid #6a6a6a;"></div>
<div class="r" style="left:45px;top:363px;width:7px;height:1.4px;background:#555;"></div>
<div class="t" style="left:64.8px;top:355.9px;font-size:18.5px;color:#252423;font-family:'Liberation Sans',sans-serif;font-weight:bold;transform:scale(1,1.08);transform-origin:1.30px 15.66px;-webkit-text-stroke:0.3px #252423;">All</div>
<div class="t" style="right:1638.2px;top:358.1px;font-size:17.6px;color:#252423;font-family:'Liberation Mono',monospace;font-weight:bold;transform:scale(1,1.1);transform-origin:100% 13.48px;-webkit-text-stroke:0.4px #252423;">218.84</div>
<div class="t" style="right:1509.2px;top:358.1px;font-size:17.6px;color:#252423;font-family:'Liberation Mono',monospace;font-weight:bold;transform:scale(1,1.1);transform-origin:100% 13.48px;-webkit-text-stroke:0.4px #252423;">243.45</div>
<div class="t" style="right:1380.2px;top:358.1px;font-size:17.6px;color:#252423;font-family:'Liberation Mono',monospace;font-weight:bold;transform:scale(1,1.1);transform-origin:100% 13.48px;-webkit-text-stroke:0.4px #252423;">265.12</div>
<div class="t" style="right:1251.2px;top:358.1px;font-size:17.6px;color:#252423;font-family:'Liberation Mono',monospace;font-weight:bold;transform:scale(1,1.1);transform-origin:100% 13.48px;-webkit-text-stroke:0.4px #252423;">283.21</div>
<div class="t" style="right:1122.2px;top:358.1px;font-size:17.6px;color:#252423;font-family:'Liberation Mono',monospace;font-weight:bold;transform:scale(1,1.1);transform-origin:100% 13.48px;-webkit-text-stroke:0.4px #252423;">288.05</div>
<div class="t" style="right:993.2px;top:358.1px;font-size:17.6px;color:#252423;font-family:'Liberation Mono',monospace;font-weight:bold;transform:scale(1,1.1);transform-origin:100% 13.48px;-webkit-text-stroke:0.4px #252423;">323.94</div>
<div class="t" style="right:864.2px;top:358.1px;font-size:17.6px;color:#252423;font-family:'Liberation Mono',monospace;font-weight:bold;transform:scale(1,1.1);transform-origin:100% 13.48px;-webkit-text-stroke:0.4px #252423;">327.80</div>
<div class="t" style="right:735.2px;top:358.1px;font-size:17.6px;color:#252423;font-family:'Liberation Mono',monospace;font-weight:bold;transform:scale(1,1.1);transform-origin:100% 13.48px;-webkit-text-stroke:0.4px #252423;">316.30</div>
<div class="t" style="right:606.2px;top:358.1px;font-size:17.6px;color:#252423;font-family:'Liberation Mono',monospace;font-weight:bold;transform:scale(1,1.1);transform-origin:100% 13.48px;-webkit-text-stroke:0.4px #252423;">300.91</div>
<div class="t" style="right:477.2px;top:358.1px;font-size:17.6px;color:#252423;font-family:'Liberation Mono',monospace;font-weight:bold;transform:scale(1,1.1);transform-origin:100% 13.48px;-webkit-text-stroke:0.4px #252423;">290.12</div>
<div class="t" style="right:348.2px;top:358.1px;font-size:17.6px;color:#252423;font-family:'Liberation Mono',monospace;font-weight:bold;transform:scale(1,1.1);transform-origin:100% 13.48px;-webkit-text-stroke:0.4px #252423;">310.45</div>
<div class="t" style="right:219.2px;top:358.1px;font-size:17.6px;color:#252423;font-family:'Liberation Mono',monospace;font-weight:bold;transform:scale(1,1.1);transform-origin:100% 13.48px;-webkit-text-stroke:0.4px #252423;">335.20</div>
<div class="r" style="left:42px;top:396.4px;width:11px;height:11px;border:1.2px solid #6a6a6a;"></div>
<div class="r" style="left:45px;top:402px;width:7px;height:1.4px;background:#555;"></div>
<div class="t" style="left:64.8px;top:394.9px;font-size:18.5px;color:#252423;font-family:'Liberation Sans',sans-serif;font-weight:bold;transform:scale(1,1.08);transform-origin:1.30px 15.66px;-webkit-text-stroke:0.3px #252423;">International</div>
<div class="t" style="right:1638.2px;top:397.1px;font-size:17.6px;color:#252423;font-family:'Liberation Mono',monospace;font-weight:bold;transform:scale(1,1.1);transform-origin:100% 13.48px;-webkit-text-stroke:0.4px #252423;">88.76</div>
<div class="t" style="right:1509.2px;top:397.1px;font-size:17.6px;color:#252423;font-family:'Liberation Mono',monospace;font-weight:bold;transform:scale(1,1.1);transform-origin:100% 13.48px;-webkit-text-stroke:0.4px #252423;">89.34</div>
<div class="t" style="right:1380.2px;top:397.1px;font-size:17.6px;color:#252423;font-family:'Liberation Mono',monospace;font-weight:bold;transform:scale(1,1.1);transform-origin:100% 13.48px;-webkit-text-stroke:0.4px #252423;">95.74</div>
<div class="t" style="right:1251.2px;top:397.1px;font-size:17.6px;color:#252423;font-family:'Liberation Mono',monospace;font-weight:bold;transform:scale(1,1.1);transform-origin:100% 13.48px;-webkit-text-stroke:0.4px #252423;">105.35</div>
<div class="t" style="right:1122.2px;top:397.1px;font-size:17.6px;color:#252423;font-family:'Liberation Mono',monospace;font-weight:bold;transform:scale(1,1.1);transform-origin:100% 13.48px;-webkit-text-stroke:0.4px #252423;">114.26</div>
<div class="t" style="right:993.2px;top:397.1px;font-size:17.6px;color:#252423;font-family:'Liberation Mono',monospace;font-weight:bold;transform:scale(1,1.1);transform-origin:100% 13.48px;-webkit-text-stroke:0.4px #252423;">128.22</div>
<div class="t" style="right:864.2px;top:397.1px;font-size:17.6px;color:#252423;font-family:'Liberation Mono',monospace;font-weight:bold;transform:scale(1,1.1);transform-origin:100% 13.48px;-webkit-text-stroke:0.4px #252423;">129.37</div>
<div class="t" style="right:735.2px;top:397.1px;font-size:17.6px;color:#252423;font-family:'Liberation Mono',monospace;font-weight:bold;transform:scale(1,1.1);transform-origin:100% 13.48px;-webkit-text-stroke:0.4px #252423;">132.50</div>
<div class="t" style="right:606.2px;top:397.1px;font-size:17.6px;color:#252423;font-family:'Liberation Mono',monospace;font-weight:bold;transform:scale(1,1.1);transform-origin:100% 13.48px;-webkit-text-stroke:0.4px #252423;">113.36</div>
<div class="t" style="right:477.2px;top:397.1px;font-size:17.6px;color:#252423;font-family:'Liberation Mono',monospace;font-weight:bold;transform:scale(1,1.1);transform-origin:100% 13.48px;-webkit-text-stroke:0.4px #252423;">101.20</div>
<div class="t" style="right:348.2px;top:397.1px;font-size:17.6px;color:#252423;font-family:'Liberation Mono',monospace;font-weight:bold;transform:scale(1,1.1);transform-origin:100% 13.48px;-webkit-text-stroke:0.4px #252423;">112.40</div>
<div class="t" style="right:219.2px;top:397.1px;font-size:17.6px;color:#252423;font-family:'Liberation Mono',monospace;font-weight:bold;transform:scale(1,1.1);transform-origin:100% 13.48px;-webkit-text-stroke:0.4px #252423;">120.11</div>
<div class="t" style="left:74.5px;top:423.4px;font-size:18.5px;color:#252423;font-family:'Liberation Sans',sans-serif;transform:scale(0.91,1.08);transform-origin:0.00px 15.66px;-webkit-text-stroke:0.15px #252423;">APAC</div>
<div class="t" style="right:1638.2px;top:425.6px;font-size:17.6px;color:#252423;font-family:'Liberation Mono',monospace;transform:scale(1,1.1);transform-origin:100% 13.48px;-webkit-text-stroke:0.25px #252423;">27.99</div>
<div class="t" style="right:1509.2px;top:425.6px;font-size:17.6px;color:#252423;font-family:'Liberation Mono',monospace;transform:scale(1,1.1);transform-origin:100% 13.48px;-webkit-text-stroke:0.25px #252423;">29.06</div>
<div class="t" style="right:1380.2px;top:425.6px;font-size:17.6px;color:#252423;font-family:'Liberation Mono',monospace;transform:scale(1,1.1);transform-origin:100% 13.48px;-webkit-text-stroke:0.25px #252423;">31.78</div>
<div class="t" style="right:1251.2px;top:425.6px;font-size:17.6px;color:#252423;font-family:'Liberation Mono',monospace;transform:scale(1,1.1);transform-origin:100% 13.48px;-webkit-text-stroke:0.25px #252423;">36.63</div>
<div class="t" style="right:1122.2px;top:425.6px;font-size:17.6px;color:#252423;font-family:'Liberation Mono',monospace;transform:scale(1,1.1);transform-origin:100% 13.48px;-webkit-text-stroke:0.25px #252423;">34.54</div>
<div class="t" style="right:993.2px;top:425.6px;font-size:17.6px;color:#252423;font-family:'Liberation Mono',monospace;transform:scale(1,1.1);transform-origin:100% 13.48px;-webkit-text-stroke:0.25px #252423;">27.66</div>
<div class="t" style="right:864.2px;top:425.6px;font-size:17.6px;color:#252423;font-family:'Liberation Mono',monospace;transform:scale(1,1.1);transform-origin:100% 13.48px;-webkit-text-stroke:0.25px #252423;">30.21</div>
<div class="t" style="right:735.2px;top:425.6px;font-size:17.6px;color:#252423;font-family:'Liberation Mono',monospace;transform:scale(1,1.1);transform-origin:100% 13.48px;-webkit-text-stroke:0.25px #252423;">27.88</div>
<div class="t" style="right:606.2px;top:425.6px;font-size:17.6px;color:#252423;font-family:'Liberation Mono',monospace;transform:scale(1,1.1);transform-origin:100% 13.48px;-webkit-text-stroke:0.25px #252423;">38.61</div>
<div class="t" style="right:477.2px;top:425.6px;font-size:17.6px;color:#252423;font-family:'Liberation Mono',monospace;transform:scale(1,1.1);transform-origin:100% 13.48px;-webkit-text-stroke:0.25px #252423;">35.10</div>
<div class="t" style="right:348.2px;top:425.6px;font-size:17.6px;color:#252423;font-family:'Liberation Mono',monospace;transform:scale(1,1.1);transform-origin:100% 13.48px;-webkit-text-stroke:0.25px #252423;">33.20</div>
<div class="t" style="right:219.2px;top:425.6px;font-size:17.6px;color:#252423;font-family:'Liberation Mono',monospace;transform:scale(1,1.1);transform-origin:100% 13.48px;-webkit-text-stroke:0.25px #252423;">30.40</div>
<div class="t" style="left:73.0px;top:452.3px;font-size:18.5px;color:#252423;font-family:'Liberation Sans',sans-serif;transform:scale(0.96,1.08);transform-origin:1.48px 15.66px;-webkit-text-stroke:0.15px #252423;">EMEA</div>
<div class="t" style="right:1638.2px;top:454.5px;font-size:17.6px;color:#252423;font-family:'Liberation Mono',monospace;transform:scale(1,1.1);transform-origin:100% 13.48px;-webkit-text-stroke:0.25px #252423;">60.77</div>
<div class="t" style="right:1509.2px;top:454.5px;font-size:17.6px;color:#252423;font-family:'Liberation Mono',monospace;transform:scale(1,1.1);transform-origin:100% 13.48px;-webkit-text-stroke:0.25px #252423;">60.28</div>
<div class="t" style="right:1380.2px;top:454.5px;font-size:17.6px;color:#252423;font-family:'Liberation Mono',monospace;transform:scale(1,1.1);transform-origin:100% 13.48px;-webkit-text-stroke:0.25px #252423;">63.95</div>
<div class="t" style="right:1251.2px;top:454.5px;font-size:17.6px;color:#252423;font-family:'Liberation Mono',monospace;transform:scale(1,1.1);transform-origin:100% 13.48px;-webkit-text-stroke:0.25px #252423;">68.73</div>
<div class="t" style="right:1122.2px;top:454.5px;font-size:17.6px;color:#252423;font-family:'Liberation Mono',monospace;transform:scale(1,1.1);transform-origin:100% 13.48px;-webkit-text-stroke:0.25px #252423;">79.72</div>
<div class="t" style="right:993.2px;top:454.5px;font-size:17.6px;color:#252423;font-family:'Liberation Mono',monospace;transform:scale(1,1.1);transform-origin:100% 13.48px;-webkit-text-stroke:0.25px #252423;">100.56</div>
<div class="t" style="right:864.2px;top:454.5px;font-size:17.6px;color:#252423;font-family:'Liberation Mono',monospace;transform:scale(1,1.1);transform-origin:100% 13.48px;-webkit-text-stroke:0.25px #252423;">99.16</div>
<div class="t" style="right:735.2px;top:454.5px;font-size:17.6px;color:#252423;font-family:'Liberation Mono',monospace;transform:scale(1,1.1);transform-origin:100% 13.48px;-webkit-text-stroke:0.25px #252423;">104.62</div>
<div class="t" style="right:606.2px;top:454.5px;font-size:17.6px;color:#252423;font-family:'Liberation Mono',monospace;transform:scale(1,1.1);transform-origin:100% 13.48px;-webkit-text-stroke:0.25px #252423;">74.75</div>
<div class="t" style="right:477.2px;top:454.5px;font-size:17.6px;color:#252423;font-family:'Liberation Mono',monospace;transform:scale(1,1.1);transform-origin:100% 13.48px;-webkit-text-stroke:0.25px #252423;">66.10</div>
<div class="t" style="right:348.2px;top:454.5px;font-size:17.6px;color:#252423;font-family:'Liberation Mono',monospace;transform:scale(1,1.1);transform-origin:100% 13.48px;-webkit-text-stroke:0.25px #252423;">79.20</div>
<div class="t" style="right:219.2px;top:454.5px;font-size:17.6px;color:#252423;font-family:'Liberation Mono',monospace;transform:scale(1,1.1);transform-origin:100% 13.48px;-webkit-text-stroke:0.25px #252423;">89.71</div>
<div class="r" style="left:42px;top:485.6px;width:11px;height:11px;border:1.2px solid #6a6a6a;"></div>
<div class="r" style="left:45px;top:492px;width:7px;height:1.4px;background:#555;"></div>
<div class="t" style="left:64.8px;top:484.1px;font-size:18.5px;color:#252423;font-family:'Liberation Sans',sans-serif;font-weight:bold;transform:scale(0.94,1.08);transform-origin:1.30px 15.66px;-webkit-text-stroke:0.3px #252423;">United States</div>
<div class="t" style="right:1638.2px;top:486.3px;font-size:17.6px;color:#252423;font-family:'Liberation Mono',monospace;font-weight:bold;transform:scale(1,1.1);transform-origin:100% 13.48px;-webkit-text-stroke:0.4px #252423;">130.08</div>
<div class="t" style="right:1509.2px;top:486.3px;font-size:17.6px;color:#252423;font-family:'Liberation Mono',monospace;font-weight:bold;transform:scale(1,1.1);transform-origin:100% 13.48px;-webkit-text-stroke:0.4px #252423;">154.11</div>
<div class="t" style="right:1380.2px;top:486.3px;font-size:17.6px;color:#252423;font-family:'Liberation Mono',monospace;font-weight:bold;transform:scale(1,1.1);transform-origin:100% 13.48px;-webkit-text-stroke:0.4px #252423;">169.39</div>
<div class="t" style="right:1251.2px;top:486.3px;font-size:17.6px;color:#252423;font-family:'Liberation Mono',monospace;font-weight:bold;transform:scale(1,1.1);transform-origin:100% 13.48px;-webkit-text-stroke:0.4px #252423;">177.86</div>
<div class="t" style="right:1122.2px;top:486.3px;font-size:17.6px;color:#252423;font-family:'Liberation Mono',monospace;font-weight:bold;transform:scale(1,1.1);transform-origin:100% 13.48px;-webkit-text-stroke:0.4px #252423;">173.79</div>
<div class="t" style="right:993.2px;top:486.3px;font-size:17.6px;color:#252423;font-family:'Liberation Mono',monospace;font-weight:bold;transform:scale(1,1.1);transform-origin:100% 13.48px;-webkit-text-stroke:0.4px #252423;">195.72</div>
<div class="t" style="right:864.2px;top:486.3px;font-size:17.6px;color:#252423;font-family:'Liberation Mono',monospace;font-weight:bold;transform:scale(1,1.1);transform-origin:100% 13.48px;-webkit-text-stroke:0.4px #252423;">198.43</div>
<div class="t" style="right:735.2px;top:486.3px;font-size:17.6px;color:#252423;font-family:'Liberation Mono',monospace;font-weight:bold;transform:scale(1,1.1);transform-origin:100% 13.48px;-webkit-text-stroke:0.4px #252423;">183.80</div>
<div class="t" style="right:606.2px;top:486.3px;font-size:17.6px;color:#252423;font-family:'Liberation Mono',monospace;font-weight:bold;transform:scale(1,1.1);transform-origin:100% 13.48px;-webkit-text-stroke:0.4px #252423;">187.55</div>
<div class="t" style="right:477.2px;top:486.3px;font-size:17.6px;color:#252423;font-family:'Liberation Mono',monospace;font-weight:bold;transform:scale(1,1.1);transform-origin:100% 13.48px;-webkit-text-stroke:0.4px #252423;">188.92</div>
<div class="t" style="right:348.2px;top:486.3px;font-size:17.6px;color:#252423;font-family:'Liberation Mono',monospace;font-weight:bold;transform:scale(1,1.1);transform-origin:100% 13.48px;-webkit-text-stroke:0.4px #252423;">198.05</div>
<div class="t" style="right:219.2px;top:486.3px;font-size:17.6px;color:#252423;font-family:'Liberation Mono',monospace;font-weight:bold;transform:scale(1,1.1);transform-origin:100% 13.48px;-webkit-text-stroke:0.4px #252423;">215.09</div>
<div class="t" style="left:73.0px;top:511.5px;font-size:18.5px;color:#252423;font-family:'Liberation Sans',sans-serif;transform:scale(1.03,1.08);transform-origin:1.48px 15.66px;-webkit-text-stroke:0.15px #252423;">Central</div>
<div class="t" style="right:1638.2px;top:513.7px;font-size:17.6px;color:#252423;font-family:'Liberation Mono',monospace;transform:scale(1,1.1);transform-origin:100% 13.48px;-webkit-text-stroke:0.25px #252423;">25.27</div>
<div class="t" style="right:1509.2px;top:513.7px;font-size:17.6px;color:#252423;font-family:'Liberation Mono',monospace;transform:scale(1,1.1);transform-origin:100% 13.48px;-webkit-text-stroke:0.25px #252423;">28.74</div>
<div class="t" style="right:1380.2px;top:513.7px;font-size:17.6px;color:#252423;font-family:'Liberation Mono',monospace;transform:scale(1,1.1);transform-origin:100% 13.48px;-webkit-text-stroke:0.25px #252423;">27.24</div>
<div class="t" style="right:1251.2px;top:513.7px;font-size:17.6px;color:#252423;font-family:'Liberation Mono',monospace;transform:scale(1,1.1);transform-origin:100% 13.48px;-webkit-text-stroke:0.25px #252423;">31.33</div>
<div class="t" style="right:1122.2px;top:513.7px;font-size:17.6px;color:#252423;font-family:'Liberation Mono',monospace;transform:scale(1,1.1);transform-origin:100% 13.48px;-webkit-text-stroke:0.25px #252423;">37.30</div>
<div class="t" style="right:993.2px;top:513.7px;font-size:17.6px;color:#252423;font-family:'Liberation Mono',monospace;transform:scale(1,1.1);transform-origin:100% 13.48px;-webkit-text-stroke:0.25px #252423;">38.22</div>
<div class="t" style="right:864.2px;top:513.7px;font-size:17.6px;color:#252423;font-family:'Liberation Mono',monospace;transform:scale(1,1.1);transform-origin:100% 13.48px;-webkit-text-stroke:0.25px #252423;">39.10</div>
<div class="t" style="right:735.2px;top:513.7px;font-size:17.6px;color:#252423;font-family:'Liberation Mono',monospace;transform:scale(1,1.1);transform-origin:100% 13.48px;-webkit-text-stroke:0.25px #252423;">36.60</div>
<div class="t" style="right:606.2px;top:513.7px;font-size:17.6px;color:#252423;font-family:'Liberation Mono',monospace;transform:scale(1,1.1);transform-origin:100% 13.48px;-webkit-text-stroke:0.25px #252423;">35.45</div>
<div class="t" style="right:477.2px;top:513.7px;font-size:17.6px;color:#252423;font-family:'Liberation Mono',monospace;transform:scale(1,1.1);transform-origin:100% 13.48px;-webkit-text-stroke:0.25px #252423;">30.20</div>
<div class="t" style="right:348.2px;top:513.7px;font-size:17.6px;color:#252423;font-family:'Liberation Mono',monospace;transform:scale(1,1.1);transform-origin:100% 13.48px;-webkit-text-stroke:0.25px #252423;">40.40</div>
<div class="t" style="right:219.2px;top:513.7px;font-size:17.6px;color:#252423;font-family:'Liberation Mono',monospace;transform:scale(1,1.1);transform-origin:100% 13.48px;-webkit-text-stroke:0.25px #252423;">41.60</div>
<div class="t" style="left:73.0px;top:541.1px;font-size:18.5px;color:#252423;font-family:'Liberation Sans',sans-serif;transform:scale(0.94,1.08);transform-origin:1.48px 15.66px;-webkit-text-stroke:0.15px #252423;">East</div>
<div class="t" style="right:1638.2px;top:543.3px;font-size:17.6px;color:#252423;font-family:'Liberation Mono',monospace;transform:scale(1,1.1);transform-origin:100% 13.48px;-webkit-text-stroke:0.25px #252423;">49.97</div>
<div class="t" style="right:1509.2px;top:543.3px;font-size:17.6px;color:#252423;font-family:'Liberation Mono',monospace;transform:scale(1,1.1);transform-origin:100% 13.48px;-webkit-text-stroke:0.25px #252423;">58.79</div>
<div class="t" style="right:1380.2px;top:543.3px;font-size:17.6px;color:#252423;font-family:'Liberation Mono',monospace;transform:scale(1,1.1);transform-origin:100% 13.48px;-webkit-text-stroke:0.25px #252423;">72.78</div>
<div class="t" style="right:1251.2px;top:543.3px;font-size:17.6px;color:#252423;font-family:'Liberation Mono',monospace;transform:scale(1,1.1);transform-origin:100% 13.48px;-webkit-text-stroke:0.25px #252423;">74.31</div>
<div class="t" style="right:1122.2px;top:543.3px;font-size:17.6px;color:#252423;font-family:'Liberation Mono',monospace;transform:scale(1,1.1);transform-origin:100% 13.48px;-webkit-text-stroke:0.25px #252423;">64.95</div>
<div class="t" style="right:993.2px;top:543.3px;font-size:17.6px;color:#252423;font-family:'Liberation Mono',monospace;transform:scale(1,1.1);transform-origin:100% 13.48px;-webkit-text-stroke:0.25px #252423;">70.02</div>
<div class="t" style="right:864.2px;top:543.3px;font-size:17.6px;color:#252423;font-family:'Liberation Mono',monospace;transform:scale(1,1.1);transform-origin:100% 13.48px;-webkit-text-stroke:0.25px #252423;">75.11</div>
<div class="t" style="right:735.2px;top:543.3px;font-size:17.6px;color:#252423;font-family:'Liberation Mono',monospace;transform:scale(1,1.1);transform-origin:100% 13.48px;-webkit-text-stroke:0.25px #252423;">72.40</div>
<div class="t" style="right:606.2px;top:543.3px;font-size:17.6px;color:#252423;font-family:'Liberation Mono',monospace;transform:scale(1,1.1);transform-origin:100% 13.48px;-webkit-text-stroke:0.25px #252423;">75.25</div>
<div class="t" style="right:477.2px;top:543.3px;font-size:17.6px;color:#252423;font-family:'Liberation Mono',monospace;transform:scale(1,1.1);transform-origin:100% 13.48px;-webkit-text-stroke:0.25px #252423;">60.20</div>
<div class="t" style="right:348.2px;top:543.3px;font-size:17.6px;color:#252423;font-family:'Liberation Mono',monospace;transform:scale(1,1.1);transform-origin:100% 13.48px;-webkit-text-stroke:0.25px #252423;">55.49</div>
<div class="t" style="right:219.2px;top:543.3px;font-size:17.6px;color:#252423;font-family:'Liberation Mono',monospace;transform:scale(1,1.1);transform-origin:100% 13.48px;-webkit-text-stroke:0.25px #252423;">58.80</div>
<div class="t" style="left:73.0px;top:569.7px;font-size:18.5px;color:#252423;font-family:'Liberation Sans',sans-serif;transform:scale(1.05,1.08);transform-origin:1.48px 15.66px;-webkit-text-stroke:0.15px #252423;">Midwest</div>
<div class="t" style="right:1638.2px;top:571.9px;font-size:17.6px;color:#252423;font-family:'Liberation Mono',monospace;transform:scale(1,1.1);transform-origin:100% 13.48px;-webkit-text-stroke:0.25px #252423;">24.27</div>
<div class="t" style="right:1509.2px;top:571.9px;font-size:17.6px;color:#252423;font-family:'Liberation Mono',monospace;transform:scale(1,1.1);transform-origin:100% 13.48px;-webkit-text-stroke:0.25px #252423;">20.58</div>
<div class="t" style="right:1380.2px;top:571.9px;font-size:17.6px;color:#252423;font-family:'Liberation Mono',monospace;transform:scale(1,1.1);transform-origin:100% 13.48px;-webkit-text-stroke:0.25px #252423;">24.54</div>
<div class="t" style="right:1251.2px;top:571.9px;font-size:17.6px;color:#252423;font-family:'Liberation Mono',monospace;transform:scale(1,1.1);transform-origin:100% 13.48px;-webkit-text-stroke:0.25px #252423;">24.84</div>
<div class="t" style="right:1122.2px;top:571.9px;font-size:17.6px;color:#252423;font-family:'Liberation Mono',monospace;transform:scale(1,1.1);transform-origin:100% 13.48px;-webkit-text-stroke:0.25px #252423;">29.67</div>
<div class="t" style="right:993.2px;top:571.9px;font-size:17.6px;color:#252423;font-family:'Liberation Mono',monospace;transform:scale(1,1.1);transform-origin:100% 13.48px;-webkit-text-stroke:0.25px #252423;">30.10</div>
<div class="t" style="right:864.2px;top:571.9px;font-size:17.6px;color:#252423;font-family:'Liberation Mono',monospace;transform:scale(1,1.1);transform-origin:100% 13.48px;-webkit-text-stroke:0.25px #252423;">28.20</div>
<div class="t" style="right:735.2px;top:571.9px;font-size:17.6px;color:#252423;font-family:'Liberation Mono',monospace;transform:scale(1,1.1);transform-origin:100% 13.48px;-webkit-text-stroke:0.25px #252423;">27.90</div>
<div class="t" style="right:606.2px;top:571.9px;font-size:17.6px;color:#252423;font-family:'Liberation Mono',monospace;transform:scale(1,1.1);transform-origin:100% 13.48px;-webkit-text-stroke:0.25px #252423;">31.98</div>
<div class="t" style="right:477.2px;top:571.9px;font-size:17.6px;color:#252423;font-family:'Liberation Mono',monospace;transform:scale(1,1.1);transform-origin:100% 13.48px;-webkit-text-stroke:0.25px #252423;">27.87</div>
<div class="t" style="right:348.2px;top:571.9px;font-size:17.6px;color:#252423;font-family:'Liberation Mono',monospace;transform:scale(1,1.1);transform-origin:100% 13.48px;-webkit-text-stroke:0.25px #252423;">24.39</div>
<div class="t" style="right:219.2px;top:571.9px;font-size:17.6px;color:#252423;font-family:'Liberation Mono',monospace;transform:scale(1,1.1);transform-origin:100% 13.48px;-webkit-text-stroke:0.25px #252423;">20.32</div>
<div class="t" style="left:73.0px;top:598.4px;font-size:18.5px;color:#252423;font-family:'Liberation Sans',sans-serif;transform:scale(1,1.08);transform-origin:1.48px 15.66px;-webkit-text-stroke:0.15px #252423;">Pacific</div>
<div class="t" style="right:1638.2px;top:600.6px;font-size:17.6px;color:#252423;font-family:'Liberation Mono',monospace;transform:scale(1,1.1);transform-origin:100% 13.48px;-webkit-text-stroke:0.25px #252423;">30.58</div>
<div class="t" style="right:1509.2px;top:600.6px;font-size:17.6px;color:#252423;font-family:'Liberation Mono',monospace;transform:scale(1,1.1);transform-origin:100% 13.48px;-webkit-text-stroke:0.25px #252423;">46.00</div>
<div class="t" style="right:1380.2px;top:600.6px;font-size:17.6px;color:#252423;font-family:'Liberation Mono',monospace;transform:scale(1,1.1);transform-origin:100% 13.48px;-webkit-text-stroke:0.25px #252423;">44.82</div>
<div class="t" style="right:1251.2px;top:600.6px;font-size:17.6px;color:#252423;font-family:'Liberation Mono',monospace;transform:scale(1,1.1);transform-origin:100% 13.48px;-webkit-text-stroke:0.25px #252423;">47.38</div>
<div class="t" style="right:1122.2px;top:600.6px;font-size:17.6px;color:#252423;font-family:'Liberation Mono',monospace;transform:scale(1,1.1);transform-origin:100% 13.48px;-webkit-text-stroke:0.25px #252423;">41.87</div>
<div class="t" style="right:993.2px;top:600.6px;font-size:17.6px;color:#252423;font-family:'Liberation Mono',monospace;transform:scale(1,1.1);transform-origin:100% 13.48px;-webkit-text-stroke:0.25px #252423;">47.30</div>
<div class="t" style="right:864.2px;top:600.6px;font-size:17.6px;color:#252423;font-family:'Liberation Mono',monospace;transform:scale(1,1.1);transform-origin:100% 13.48px;-webkit-text-stroke:0.25px #252423;">44.60</div>
<div class="t" style="right:735.2px;top:600.6px;font-size:17.6px;color:#252423;font-family:'Liberation Mono',monospace;transform:scale(1,1.1);transform-origin:100% 13.48px;-webkit-text-stroke:0.25px #252423;">41.50</div>
<div class="t" style="right:606.2px;top:600.6px;font-size:17.6px;color:#252423;font-family:'Liberation Mono',monospace;transform:scale(1,1.1);transform-origin:100% 13.48px;-webkit-text-stroke:0.25px #252423;">44.87</div>
<div class="t" style="right:477.2px;top:600.6px;font-size:17.6px;color:#252423;font-family:'Liberation Mono',monospace;transform:scale(1,1.1);transform-origin:100% 13.48px;-webkit-text-stroke:0.25px #252423;">45.82</div>
<div class="t" style="right:348.2px;top:600.6px;font-size:17.6px;color:#252423;font-family:'Liberation Mono',monospace;transform:scale(1,1.1);transform-origin:100% 13.48px;-webkit-text-stroke:0.25px #252423;">33.32</div>
<div class="t" style="right:219.2px;top:600.6px;font-size:17.6px;color:#252423;font-family:'Liberation Mono',monospace;transform:scale(1,1.1);transform-origin:100% 13.48px;-webkit-text-stroke:0.25px #252423;">31.52</div>
<div class="r" style="left:298.1px;top:423.3px;width:19.2px;height:19.2px;border-radius:50%;background:#0a78d6;color:#fff;font-size:11px;line-height:19.2px;text-align:center;font-family:'Liberation Sans',sans-serif">5</div>
<div class="r" style="left:427.0px;top:483.1px;width:19.2px;height:19.2px;border-radius:50%;background:#4e9d4e;color:#fff;font-size:11px;line-height:19.2px;text-align:center;font-family:'Liberation Sans',sans-serif">F</div>
<div class="r" style="left:427.0px;top:598.5px;width:19.2px;height:19.2px;border-radius:50%;background:#c64b4b;color:#fff;font-size:11px;line-height:19.2px;text-align:center;font-family:'Liberation Sans',sans-serif">C</div>
<div class="r" style="left:813.8px;top:423.4px;width:19.2px;height:19.2px;border-radius:50%;background:#f04343;color:#fff;font-size:11px;line-height:19.2px;text-align:center;font-family:'Liberation Sans',sans-serif">1</div>
<div class="r" style="left:1071.4px;top:422.4px;width:19.2px;height:19.2px;border-radius:50%;background:#c64646;color:#fff;font-size:12px;line-height:19.2px;text-align:center;font-family:'Liberation Sans',sans-serif"></div>
<svg width="2048" height="847"><path d="M548.7,388.3 H566.9 L548.7,406.4 Z" fill="#c84a4a"/><text x="676.8" y="556.3" font-family="Liberation Mono" font-weight="bold" font-size="18" fill="#3a8ee0" stroke="#3a8ee0" stroke-width="0.3" textLength="30.5" lengthAdjust="spacingAndGlyphs">***</text><circle cx="953" cy="555.4" r="8.8" fill="none" stroke="#5cbf5c" stroke-width="1.6"/></svg>
<svg width="2048" height="847"><line x1="12" y1="546.2" x2="26" y2="546.2" stroke="#777" stroke-width="1.2"/><line x1="12" y1="550.3" x2="26" y2="550.3" stroke="#777" stroke-width="1.2"/><line x1="12" y1="554.4" x2="26" y2="554.4" stroke="#777" stroke-width="1.2"/><line x1="12" y1="558.5" x2="26" y2="558.5" stroke="#777" stroke-width="1.2"/></svg>
<div class="r" style="left:987px;top:428px;width:372px;height:252px;background:#fff;box-shadow:0 1px 7px rgba(0,0,0,0.22)"></div>
<svg width="2048" height="847"><defs><filter id="ds" x="-50%" y="-50%" width="200%" height="200%"><feDropShadow dx="-1" dy="1" stdDeviation="2.2" flood-color="#000" flood-opacity="0.25"/></filter></defs><path d="M988,537.5 L972,553.3 L988,569 Z" fill="#fff" filter="url(#ds)"/><rect x="987" y="530" width="8" height="46" fill="#fff"/></svg>
<div class="r" style="left:1003.5px;top:477px;width:339px;height:51px;background:#f4f4f4;border:1px solid #dcdcdc;box-sizing:border-box;"></div>
<div class="r" style="left:1003.5px;top:527px;width:339px;height:83px;background:#fff;border:1px solid #d4d4d4;border-top:2px solid #d0d0d0;box-sizing:border-box;"></div>
<svg width="2048" height="847"><text x="1022.5" y="510" font-family="Liberation Sans" font-weight="bold" font-size="21" fill="#333" textLength="12.5" lengthAdjust="spacingAndGlyphs">B</text><path d="M1069.3,495 H1076 M1063.5,509.7 H1070.2 M1072.6,495 L1066.9,509.7" fill="none" stroke="#333" stroke-width="1.6"/><path d="M1104,494.5 V504 Q1104,509 1109.4,509 Q1114.8,509 1114.8,504 V494.5 M1102,512 H1116.8" fill="none" stroke="#333" stroke-width="1.6"/><line x1="1133.6" y1="492.6" x2="1133.6" y2="512.4" stroke="#cfcfcf" stroke-width="1.2" /><path d="M1151,510.5 L1158.2,494 L1165.3,510.5 M1153.5,504.5 H1163" fill="none" stroke="#333" stroke-width="1.7"/><rect x="1144.5" y="512.4" width="27.5" height="4.6" fill="#333"/><polyline points="1175.5,500 1180.45,505.8 1185.4,500" fill="none" stroke="#a0a0a0" stroke-width="1.2"/><path d="M1216,506 L1225.5,494.5 Q1228,492.5 1230.5,494.8 Q1232,497 1230.5,499 L1221,509.5 Z M1218,503.5 L1223.8,508" fill="none" stroke="#444" stroke-width="1.5" stroke-linejoin="round"/><path d="M1216,506 L1214,509.8 L1219.5,509.2 Z" fill="#1f5fbf"/><rect x="1209" y="512" width="27" height="5.5" fill="#fff"/><polyline points="1239.5,500 1244.6,505.7 1249.7,500" fill="none" stroke="#a0a0a0" stroke-width="1.2"/><path d="M1278.5,500.5 L1275,504 Q1271.8,507.5 1274.8,510 Q1277.5,512 1280.5,509 L1283,506.5 M1281.5,503.5 L1285,500 Q1288.2,496.5 1285.2,494 Q1282.5,492 1279.5,495 L1277,497.5 M1276.5,506.5 L1283.5,497.5" fill="none" stroke="#a8a8a8" stroke-width="1.5"/><circle cx="1019.2" cy="642.4" r="8.6" fill="#0a78d6"/><circle cx="1055.7" cy="642.4" r="8.6" fill="#707070"/><circle cx="1092.2" cy="642.4" r="8.6" fill="#4ea24e"/><circle cx="1128.7" cy="642.4" r="8.6" fill="#c84848"/><circle cx="1165.2" cy="642.4" r="8.6" fill="#f3d455"/><circle cx="1092.2" cy="642.4" r="12.3" fill="none" stroke="#333" stroke-width="1.5"/><defs><radialGradient id="rg"><stop offset="0" stop-color="#fff"/><stop offset="1" stop-color="#fff" stop-opacity="0"/></radialGradient></defs><g transform="translate(1201.8,642.4)"><path d="M0,0 L0.00,-8.60 A8.6,8.6 0 0 1 7.45,-4.30 Z" fill="#f5d34a"/><path d="M0,0 L7.45,-4.30 A8.6,8.6 0 0 1 7.45,4.30 Z" fill="#7cc85c"/><path d="M0,0 L7.45,4.30 A8.6,8.6 0 0 1 0.00,8.60 Z" fill="#4bb6e8"/><path d="M0,0 L0.00,8.60 A8.6,8.6 0 0 1 -7.45,4.30 Z" fill="#6a6ee0"/><path d="M0,0 L-7.45,4.30 A8.6,8.6 0 0 1 -7.45,-4.30 Z" fill="#d45ad0"/><path d="M0,0 L-7.45,-4.30 A8.6,8.6 0 0 1 -0.00,-8.60 Z" fill="#ee5a5a"/><circle r="8.6" fill="url(#rg)"/></g></svg>
<div class="t" style="left:1011.2px;top:533.7px;font-size:19.3px;color:#bcc0c9;font-family:'Liberation Sans',sans-serif;transform:scale(1,1.08);transform-origin:1.54px 16.34px;">Enter text</div>
<div class="r" style="left:1238.3px;top:619.2px;width:104.6px;height:48.6px;background:#f3f3f3;"></div>
<div class="t" style="left:1270.7px;top:634.3px;font-size:17.2px;color:#a0a0a0;font-family:'Liberation Sans',sans-serif;transform:scale(1,1.08);transform-origin:0.86px 14.56px;">Save</div>
<div class="r" style="left:1309px;top:444.5px;width:49.5px;height:30px;border:2.6px solid #ff2424;border-radius:7px;box-sizing:border-box;background:#fff;box-shadow:inset 0 0 3px rgba(0,0,0,0.12)"></div>
<svg width="2048" height="847"><circle cx="1325.6" cy="457.6" r="1.35" fill="#333"/><circle cx="1333" cy="457.6" r="1.35" fill="#333"/><circle cx="1340.3" cy="457.6" r="1.35" fill="#333"/></svg>
<div class="r" style="left:1504px;top:296.5px;width:419px;height:242.5px;background:#fff;box-shadow:0 1px 6px rgba(0,0,0,0.25)"></div>
<div class="t" style="left:1517.5px;top:319.7px;font-size:21.9px;color:#323130;font-family:'Liberation Sans',sans-serif;transform:scale(1,1.08);transform-origin:1.09px 18.54px;">Settings</div>
<div class="t" style="left:1516.7px;top:354.6px;font-size:20.9px;color:#3b3a39;font-family:'Liberation Sans',sans-serif;transform:scale(1,1.08);transform-origin:1.88px 17.70px;-webkit-text-stroke:0.55px #3b3a39;">Indicator display</div>
<div class="r" style="left:1518.6px;top:391px;width:264.7px;height:50.5px;border:1px solid #dadada;border-radius:3px;box-sizing:border-box"></div>
<div class="r" style="left:1790px;top:391px;width:115px;height:50.5px;border:1px solid #dadada;border-radius:2px;box-sizing:border-box"></div>
<div class="r" style="left:1538.8px;top:403.5px;width:25.4px;height:25.4px;border-radius:50%;background:#0a78d6"></div>
<div class="t" style="left:1545.9px;top:407.8px;font-size:18px;color:#fff;font-family:'Liberation Sans',sans-serif;transform:scale(1,1.08);transform-origin:1.37px 15.24px;">1</div>
<div class="t" style="left:1575.9px;top:406.4px;font-size:20px;color:#555;font-family:'Liberation Sans',sans-serif;transform:scale(1,1.08);transform-origin:1.60px 16.93px;">Priority</div>
<div class="t" style="left:1807.2px;top:404.1px;font-size:19px;color:#323130;font-family:'Liberation Sans',sans-serif;transform:scale(1,1.08);transform-origin:1.44px 16.09px;">12px</div>
<svg width="2048" height="847"><polyline points="1749.3,413 1756.75,420.6 1764.2,413" fill="none" stroke="#555" stroke-width="1.5"/><polyline points="1868,407.4 1877.65,417.3 1887.3,407.4" fill="none" stroke="#333" stroke-width="1.8"/></svg>
<div class="r" style="left:1776px;top:468px;width:129px;height:57.7px;background:#0a78d4;"></div>
<div class="r" style="left:1921px;top:315px;width:1px;height:158px;background:#dcdcdc;"></div>
<div class="t" style="left:1813.7px;top:489.2px;font-size:19.2px;color:#fff;font-family:'Liberation Sans',sans-serif;font-weight:bold;transform:scale(1,1.08);transform-origin:0.00px 16.26px;">Apply</div>
<svg width="2048" height="847"><defs><filter id="as" x="-20%" y="-50%" width="140%" height="200%"><feDropShadow dx="0" dy="2" stdDeviation="1.5" flood-color="#000" flood-opacity="0.3"/></filter></defs><g filter="url(#as)"><path d="M1358.24,451.77 L1491.05,420.52 L1489.75,415.28 L1357.76,449.83 Z" fill="#ff1a1a"/><path d="M1504,414.5 L1488.8,411.6 L1492,424.2 Z" fill="#ff1a1a"/></g></svg>
</body></html>
